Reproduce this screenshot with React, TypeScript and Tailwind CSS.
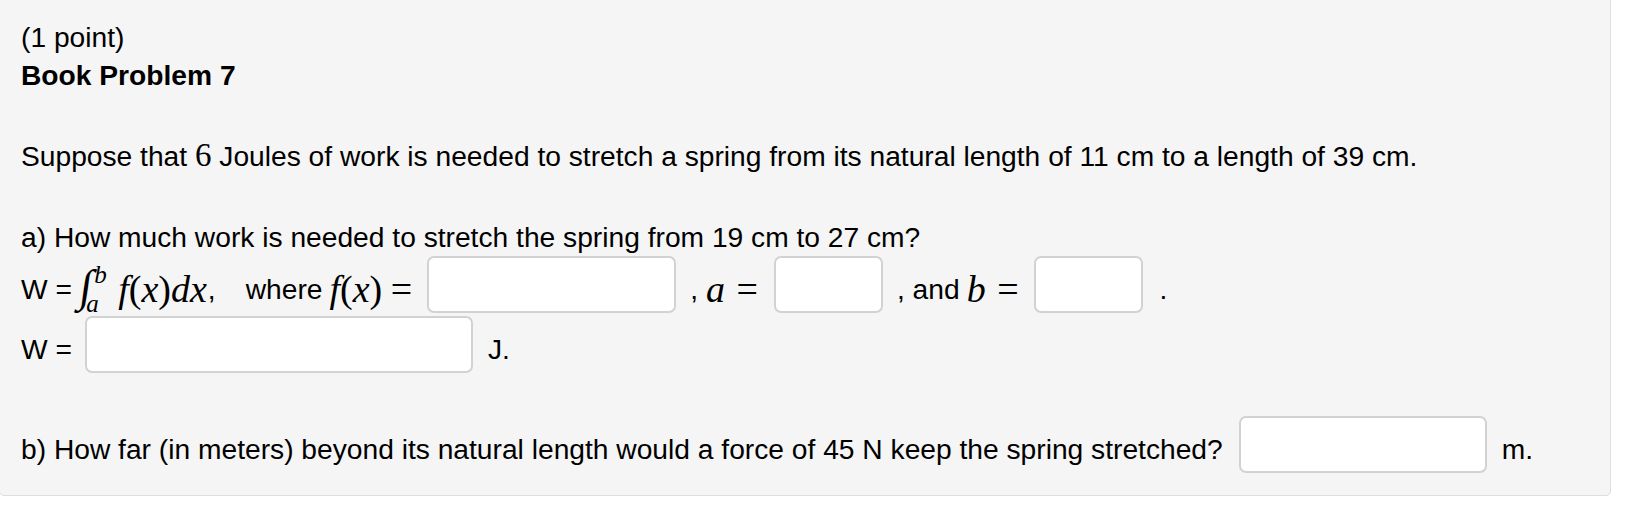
import React from "react";

const sans = { fontFamily: '"Liberation Sans", Arial, sans-serif' };

function Box({ w }: { w: string }) {
  return (
    <span
      className={`inline-block h-[57px] ${w} shrink-0 rounded-[7px] border-2 border-[#d2d2d2] bg-white`}
    />
  );
}

export default function App() {
  return (
    <div className="min-h-[506px] w-[1630px] bg-white" style={sans}>
      <div className="-ml-px -mt-px w-[1612px] rounded-b-[5px] border border-[#dedede] bg-[#f5f5f5] pb-[17px] pl-[21px] pt-[18px] text-[28.2px] leading-[38px] text-black">
        <div className="h-[38px]">(1 point)</div>
        <div className="h-[38px] font-bold">Book Problem 7</div>

        <div className="mt-[42px] h-[38px] whitespace-nowrap">
          Suppose that{" "}
          <span className="font-['Liberation_Serif',serif] text-[33px]">6</span>{" "}
          Joules of work is needed to stretch a spring from its natural length of 11 cm to a length of 39 cm.
        </div>

        <div className="mt-[44px] h-[38px] whitespace-nowrap">
          a) How much work is needed to stretch the spring from 19 cm to 27 cm?
        </div>

        <div className="mt-[4px] flex h-[58px] items-center whitespace-nowrap">
          <span>W =</span>
          <span className="ml-[8px] inline-flex h-[50px] items-center font-['Liberation_Serif',serif]">
            <span className="-mt-[5px] -skew-x-[8deg] text-[45px] leading-none">∫</span>
            <span className="relative h-[50px] w-[20px]">
              <span className="absolute left-[2px] -top-[2px] text-[25px] italic leading-none">b</span>
              <span className="absolute -left-[6px] top-[27px] text-[25px] italic leading-none">a</span>
            </span>
          </span>
          <span className="ml-[6px] font-['Liberation_Serif',serif] text-[38px]">
            <i>f</i>(<i>x</i>)<i>dx</i>
          </span>
          <span className="ml-[1px]">,</span>
          <span className="ml-[30px]">where</span>
          <span className="ml-[7px] font-['Liberation_Serif',serif] text-[38px]">
            <i>f</i>(<i>x</i>) <span className="-ml-[1px]">=</span>
          </span>
          <span className="ml-[15px]">
            <Box w="w-[249px]" />
          </span>
          <span className="ml-[14px]">,</span>
          <span className="ml-[8px] font-['Liberation_Serif',serif] text-[38px]">
            <i>a</i> <span className="ml-[2px]">=</span>
          </span>
          <span className="ml-[16px]">
            <Box w="w-[109px]" />
          </span>
          <span className="ml-[14px]">, and</span>
          <span className="ml-[7px] font-['Liberation_Serif',serif] text-[38px]">
            <i>b</i> <span className="ml-[2px]">=</span>
          </span>
          <span className="ml-[15px]">
            <Box w="w-[109px]" />
          </span>
          <span className="ml-[17px]">.</span>
        </div>

        <div className="mt-[2px] flex h-[58px] items-center whitespace-nowrap">
          <span>W =</span>
          <span className="ml-[13px]">
            <Box w="w-[388px]" />
          </span>
          <span className="ml-[15px]">J.</span>
        </div>

        <div className="mt-[42px] flex h-[58px] items-center whitespace-nowrap">
          <span>
            b) How far (in meters) beyond its natural length would a force of 45 N keep the spring stretched?
          </span>
          <span className="ml-[16px]">
            <Box w="w-[248px]" />
          </span>
          <span className="ml-[15px]">m.</span>
        </div>
      </div>
    </div>
  );
}
